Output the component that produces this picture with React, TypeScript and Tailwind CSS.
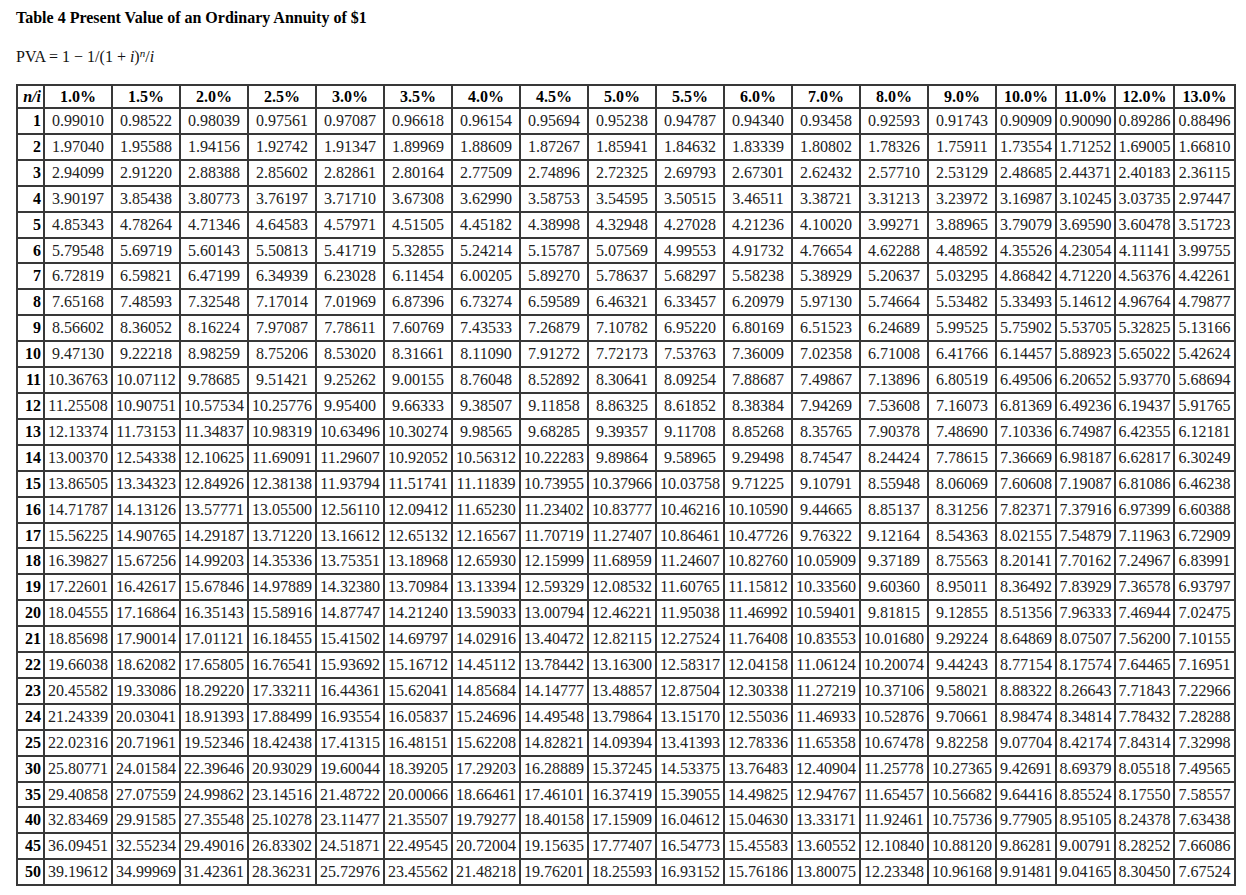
import React from "react";

const rates = ["1.0%","1.5%","2.0%","2.5%","3.0%","3.5%","4.0%","4.5%","5.0%","5.5%","6.0%","7.0%","8.0%","9.0%","10.0%","11.0%","12.0%","13.0%"];
const colW = [68,68,68,68,68,68,68,68,68,68,68,68,68,68,60,59,59,61];

const raw = `1 0.99010 0.98522 0.98039 0.97561 0.97087 0.96618 0.96154 0.95694 0.95238 0.94787 0.94340 0.93458 0.92593 0.91743 0.90909 0.90090 0.89286 0.88496
2 1.97040 1.95588 1.94156 1.92742 1.91347 1.89969 1.88609 1.87267 1.85941 1.84632 1.83339 1.80802 1.78326 1.75911 1.73554 1.71252 1.69005 1.66810
3 2.94099 2.91220 2.88388 2.85602 2.82861 2.80164 2.77509 2.74896 2.72325 2.69793 2.67301 2.62432 2.57710 2.53129 2.48685 2.44371 2.40183 2.36115
4 3.90197 3.85438 3.80773 3.76197 3.71710 3.67308 3.62990 3.58753 3.54595 3.50515 3.46511 3.38721 3.31213 3.23972 3.16987 3.10245 3.03735 2.97447
5 4.85343 4.78264 4.71346 4.64583 4.57971 4.51505 4.45182 4.38998 4.32948 4.27028 4.21236 4.10020 3.99271 3.88965 3.79079 3.69590 3.60478 3.51723
6 5.79548 5.69719 5.60143 5.50813 5.41719 5.32855 5.24214 5.15787 5.07569 4.99553 4.91732 4.76654 4.62288 4.48592 4.35526 4.23054 4.11141 3.99755
7 6.72819 6.59821 6.47199 6.34939 6.23028 6.11454 6.00205 5.89270 5.78637 5.68297 5.58238 5.38929 5.20637 5.03295 4.86842 4.71220 4.56376 4.42261
8 7.65168 7.48593 7.32548 7.17014 7.01969 6.87396 6.73274 6.59589 6.46321 6.33457 6.20979 5.97130 5.74664 5.53482 5.33493 5.14612 4.96764 4.79877
9 8.56602 8.36052 8.16224 7.97087 7.78611 7.60769 7.43533 7.26879 7.10782 6.95220 6.80169 6.51523 6.24689 5.99525 5.75902 5.53705 5.32825 5.13166
10 9.47130 9.22218 8.98259 8.75206 8.53020 8.31661 8.11090 7.91272 7.72173 7.53763 7.36009 7.02358 6.71008 6.41766 6.14457 5.88923 5.65022 5.42624
11 10.36763 10.07112 9.78685 9.51421 9.25262 9.00155 8.76048 8.52892 8.30641 8.09254 7.88687 7.49867 7.13896 6.80519 6.49506 6.20652 5.93770 5.68694
12 11.25508 10.90751 10.57534 10.25776 9.95400 9.66333 9.38507 9.11858 8.86325 8.61852 8.38384 7.94269 7.53608 7.16073 6.81369 6.49236 6.19437 5.91765
13 12.13374 11.73153 11.34837 10.98319 10.63496 10.30274 9.98565 9.68285 9.39357 9.11708 8.85268 8.35765 7.90378 7.48690 7.10336 6.74987 6.42355 6.12181
14 13.00370 12.54338 12.10625 11.69091 11.29607 10.92052 10.56312 10.22283 9.89864 9.58965 9.29498 8.74547 8.24424 7.78615 7.36669 6.98187 6.62817 6.30249
15 13.86505 13.34323 12.84926 12.38138 11.93794 11.51741 11.11839 10.73955 10.37966 10.03758 9.71225 9.10791 8.55948 8.06069 7.60608 7.19087 6.81086 6.46238
16 14.71787 14.13126 13.57771 13.05500 12.56110 12.09412 11.65230 11.23402 10.83777 10.46216 10.10590 9.44665 8.85137 8.31256 7.82371 7.37916 6.97399 6.60388
17 15.56225 14.90765 14.29187 13.71220 13.16612 12.65132 12.16567 11.70719 11.27407 10.86461 10.47726 9.76322 9.12164 8.54363 8.02155 7.54879 7.11963 6.72909
18 16.39827 15.67256 14.99203 14.35336 13.75351 13.18968 12.65930 12.15999 11.68959 11.24607 10.82760 10.05909 9.37189 8.75563 8.20141 7.70162 7.24967 6.83991
19 17.22601 16.42617 15.67846 14.97889 14.32380 13.70984 13.13394 12.59329 12.08532 11.60765 11.15812 10.33560 9.60360 8.95011 8.36492 7.83929 7.36578 6.93797
20 18.04555 17.16864 16.35143 15.58916 14.87747 14.21240 13.59033 13.00794 12.46221 11.95038 11.46992 10.59401 9.81815 9.12855 8.51356 7.96333 7.46944 7.02475
21 18.85698 17.90014 17.01121 16.18455 15.41502 14.69797 14.02916 13.40472 12.82115 12.27524 11.76408 10.83553 10.01680 9.29224 8.64869 8.07507 7.56200 7.10155
22 19.66038 18.62082 17.65805 16.76541 15.93692 15.16712 14.45112 13.78442 13.16300 12.58317 12.04158 11.06124 10.20074 9.44243 8.77154 8.17574 7.64465 7.16951
23 20.45582 19.33086 18.29220 17.33211 16.44361 15.62041 14.85684 14.14777 13.48857 12.87504 12.30338 11.27219 10.37106 9.58021 8.88322 8.26643 7.71843 7.22966
24 21.24339 20.03041 18.91393 17.88499 16.93554 16.05837 15.24696 14.49548 13.79864 13.15170 12.55036 11.46933 10.52876 9.70661 8.98474 8.34814 7.78432 7.28288
25 22.02316 20.71961 19.52346 18.42438 17.41315 16.48151 15.62208 14.82821 14.09394 13.41393 12.78336 11.65358 10.67478 9.82258 9.07704 8.42174 7.84314 7.32998
30 25.80771 24.01584 22.39646 20.93029 19.60044 18.39205 17.29203 16.28889 15.37245 14.53375 13.76483 12.40904 11.25778 10.27365 9.42691 8.69379 8.05518 7.49565
35 29.40858 27.07559 24.99862 23.14516 21.48722 20.00066 18.66461 17.46101 16.37419 15.39055 14.49825 12.94767 11.65457 10.56682 9.64416 8.85524 8.17550 7.58557
40 32.83469 29.91585 27.35548 25.10278 23.11477 21.35507 19.79277 18.40158 17.15909 16.04612 15.04630 13.33171 11.92461 10.75736 9.77905 8.95105 8.24378 7.63438
45 36.09451 32.55234 29.49016 26.83302 24.51871 22.49545 20.72004 19.15635 17.77407 16.54773 15.45583 13.60552 12.10840 10.88120 9.86281 9.00791 8.28252 7.66086
50 39.19612 34.99969 31.42361 28.36231 25.72976 23.45562 21.48218 19.76201 18.25593 16.93152 15.76186 13.80075 12.23348 10.96168 9.91481 9.04165 8.30450 7.67524`;

const rows = raw.split("\n").map((l) => l.trim().split(/\s+/));

export default function App() {
  return (
    <div className="min-h-[895px] bg-white px-4 text-[16px] text-black" style={{ fontFamily: '"Liberation Serif", "Times New Roman", serif' }}>
      <h1 className="pt-[9px] text-[16px] font-bold leading-[18px]">
        Table 4 Present Value of an Ordinary Annuity of $1
      </h1>
      <p className="mt-[21px] leading-[18px] text-[#111]">
        PVA = 1 − 1/(1 + <i>i</i>)<sup className="text-[11px] italic">n</sup>/<i>i</i>
      </p>
      <table className="mt-[18px] w-[1220px] table-fixed border-collapse border-2 border-[#383838] text-[#222]">
        <colgroup>
          <col style={{ width: 27 }} />
          {colW.map((w, i) => (
            <col key={i} style={{ width: w }} />
          ))}
        </colgroup>
        <thead>
          <tr>
            <th className="border-2 border-[#383838] px-[2px] py-0 text-right font-bold italic leading-[21px] text-black">
              n/i
            </th>
            {rates.map((r) => (
              <th key={r} className="border-2 border-[#383838] p-0 text-center font-bold leading-[21px] text-black">
                {r}
              </th>
            ))}
          </tr>
        </thead>
        <tbody>
          {rows.map((row) => (
            <tr key={row[0]}>
              <td className="border-2 border-[#383838] px-[2px] py-0 text-right font-bold leading-[23.9px] text-black">
                {row[0]}
              </td>
              {row.slice(1).map((v, i) => (
                <td key={i} className="whitespace-nowrap border-2 border-[#383838] p-0 text-center leading-[23.9px]">
                  {v}
                </td>
              ))}
            </tr>
          ))}
        </tbody>
      </table>
    </div>
  );
}
